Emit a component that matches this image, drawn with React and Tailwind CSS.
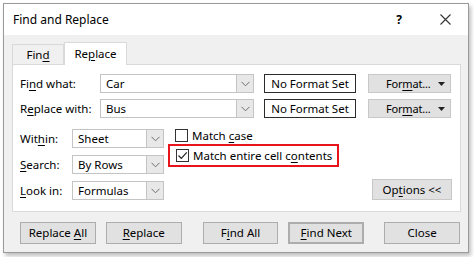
import React from "react";

const U = ({ children }) => <span className="underline underline-offset-2">{children}</span>;

function Chevron() {
  return (
    <svg width="9" height="6" viewBox="0 0 9 6" fill="none">
      <path d="M0.5 0.8 L4.5 4.8 L8.5 0.8" stroke="#6d6d6d" strokeWidth="1" />
    </svg>
  );
}

function Combo({ value, w }) {
  return (
    <div className="flex h-[19px] border border-[#c4c4c4] bg-white" style={{ width: w }}>
      <div className="flex-1 flex items-center pl-[5px] text-[11.5px] leading-none whitespace-nowrap">{value}</div>
      <div className="w-[17px] h-full bg-[#e8e8e8] border-l border-[#c4c4c4] flex items-center justify-center">
        <Chevron />
      </div>
    </div>
  );
}

function Btn({ children, className = "" }) {
  return (
    <div className={"h-[22px] w-[76px] border border-[#adadad] bg-[#e1e1e1] flex items-center justify-center text-[11.5px] leading-none whitespace-nowrap " + className}>
      <span>{children}</span>
    </div>
  );
}

function FormatBtn() {
  return (
    <div className="h-[19px] w-[83px] border border-[#c8c8c8] bg-[#e1e1e1] flex items-center text-[11px] leading-none whitespace-nowrap">
      <span className="ml-[17px] tracking-[-0.2px]">For<U>m</U>at...</span>
      <svg width="7" height="4" viewBox="0 0 7 4" className="ml-auto mr-[5px]">
        <path d="M0 0 L7 0 L3.5 4 Z" fill="#222" />
      </svg>
    </div>
  );
}

function NoFormat() {
  return (
    <div className="h-[19px] w-[92px] border border-[#2b2b2b] bg-white flex items-center justify-center text-[11.5px] leading-none whitespace-nowrap">
      No Format Set
    </div>
  );
}

function Checkbox({ checked }) {
  return (
    <div className="w-[13px] h-[13px] border border-[#333] bg-white flex items-center justify-center shrink-0">
      {checked && (
        <svg width="11" height="11" viewBox="0 0 11 11" fill="none">
          <path d="M1.5 5.5 L4.3 8.3 L9.8 2.3" stroke="#222" strokeWidth="1.2" />
        </svg>
      )}
    </div>
  );
}

const L = "text-[11.5px] leading-none whitespace-nowrap";

export default function App() {
  return (
    <div
      className="w-[474px] h-[257px] bg-white pt-[3px] pl-[3px] text-black"
      style={{ fontFamily: '"Noto Sans", "Open Sans", sans-serif' }}
    >
      <div className="w-[466px] h-[250px] border border-[#9a9a9a] bg-[#f0f0f0] flex flex-col shadow-[2px_3px_4px_rgba(0,0,0,0.25)]">
        {/* title bar */}
        <div className="h-[31px] bg-white flex items-center pl-[9px] text-[12px]">
          <span className="whitespace-nowrap">Find and Replace</span>
          <span className="ml-auto text-[12px] font-bold mr-[38px]">?</span>
          <svg width="11" height="11" viewBox="0 0 11 11" className="mr-[17px]">
            <path d="M0.5 0.5 L10.5 10.5 M10.5 0.5 L0.5 10.5" stroke="#333" strokeWidth="1.1" />
          </svg>
        </div>

        <div className="px-[8px] pt-[7px]">
          {/* tabs */}
          <div className="flex items-end h-[22px]">
            <div className={"w-[52px] h-[20px] border border-b-0 border-[#d9d9d9] bg-[#f0f0f0] flex items-center justify-center " + L}>
              <span>Fin<U>d</U></span>
            </div>
            <div className={"w-[63px] h-[23px] border border-b-0 border-[#d9d9d9] bg-white flex items-center justify-center -mb-px relative z-10 " + L}>
              <span>Re<U>p</U>lace</span>
            </div>
          </div>

          {/* panel */}
          <div className="w-[449px] h-[148px] border border-[#d9d9d9] bg-white pt-[9px] pl-[7px] flex flex-col">
            <div className="flex items-center h-[19px]">
              <div className={"w-[80px] " + L}>Fi<U>n</U>d what:</div>
              <Combo value="Car" w={154} />
              <div className="ml-[10px]"><NoFormat /></div>
              <div className="ml-[12px]"><FormatBtn /></div>
            </div>
            <div className="flex items-center h-[19px] mt-[6px]">
              <div className={"w-[80px] " + L}>R<U>e</U>place with:</div>
              <Combo value="Bus" w={154} />
              <div className="ml-[10px]"><NoFormat /></div>
              <div className="ml-[12px]"><FormatBtn /></div>
            </div>

            <div className="flex mt-[11px]">
              <div className="flex flex-col gap-[7px]">
                <div className="flex items-center h-[19px]">
                  <div className={"w-[52px] " + L}>Wit<U>h</U>in:</div>
                  <Combo value="Sheet" w={92} />
                </div>
                <div className="flex items-center h-[19px]">
                  <div className={"w-[52px] " + L}><U>S</U>earch:</div>
                  <Combo value="By Rows" w={92} />
                </div>
                <div className="flex items-center h-[19px]">
                  <div className={"w-[52px] " + L}><U>L</U>ook in:</div>
                  <Combo value="Formulas" w={92} />
                </div>
              </div>

              <div className="ml-[4px] flex flex-col">
                <div className="flex items-center h-[15px] ml-[7px] -mt-[1px]">
                  <Checkbox />
                  <span className={"ml-[4px] " + L}>Match <U>c</U>ase</span>
                </div>
                <div className="mt-[1px] w-[171px] h-[23px] border-[2px] border-[#e8141b] flex items-center pl-[6px]">
                  <Checkbox checked />
                  <span className={"ml-[4px] " + L}>Match entire cell c<U>o</U>ntents</span>
                </div>
              </div>

              <div className="ml-auto mr-[8px] self-end">
                <div className={"h-[21px] w-[80px] border border-[#c8c8c8] bg-[#e1e1e1] flex items-center justify-center " + L}>
                  <span>Op<U>t</U>ions &lt;&lt;</span>
                </div>
              </div>
            </div>
          </div>

          {/* buttons */}
          <div className="flex mt-[10px] ml-[8px]">
            <Btn>Replace <U>A</U>ll</Btn>
            <Btn className="ml-[10px]"><U>R</U>eplace</Btn>
            <Btn className="ml-[21px]">F<U>i</U>nd All</Btn>
            <Btn className="ml-[10px] border-2 border-[#0078d7]"><U>F</U>ind Next</Btn>
            <Btn className="ml-[20px]">Close</Btn>
          </div>
        </div>
      </div>
    </div>
  );
}
